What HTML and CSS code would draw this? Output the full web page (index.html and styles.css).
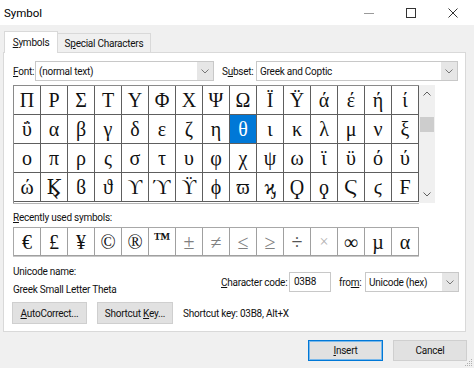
FILE: index.html
```html
<!DOCTYPE html>
<html>
<head>
<meta charset="utf-8">
<link rel="stylesheet" href="styles.css">
</head>
<body>
<div class="titlebar">
  <span class="title">Symbol</span>
  <div class="controls">
    <div class="ctrl"><svg width="10" height="10" viewBox="0 0 10 10"><path d="M0 5.5H10" stroke="#9a9a9a" stroke-width="1"/></svg></div>
    <div class="ctrl"><svg width="10" height="10" viewBox="0 0 10 10"><rect x="0.5" y="0.5" width="9" height="9" fill="none" stroke="#333" stroke-width="1"/></svg></div>
    <div class="ctrl"><svg width="10" height="10" viewBox="0 0 10 10"><path d="M0.5 0.5L9.5 9.5M9.5 0.5L0.5 9.5" stroke="#333" stroke-width="1"/></svg></div>
  </div>
</div>
<div class="tabs">
  <div class="tab active"><u>S</u>ymbols</div>
  <div class="tab">S<u>p</u>ecial Characters</div>
</div>
<div class="panel">
  <div class="fontrow">
    <span class="lbl lbl-font"><u>F</u>ont:</span>
    <div class="select sel-font"><span class="val">(normal text)</span><span class="drop"><svg width="8" height="5" viewBox="0 0 8 5"><path d="M0.5 0.5L4 4L7.5 0.5" fill="none" stroke="#777" stroke-width="1"/></svg></span></div>
    <span class="lbl lbl-subset">S<u>u</u>bset:</span>
    <div class="select sel-subset"><span class="val">Greek and Coptic</span><span class="drop"><svg width="8" height="5" viewBox="0 0 8 5"><path d="M0.5 0.5L4 4L7.5 0.5" fill="none" stroke="#777" stroke-width="1"/></svg></span></div>
  </div>
  <div class="gridwrap">
    <div class="grid">
      <div class="c">Π</div><div class="c">Ρ</div><div class="c">Σ</div><div class="c">Τ</div><div class="c">Υ</div><div class="c">Φ</div><div class="c">Χ</div><div class="c">Ψ</div><div class="c">Ω</div><div class="c">Ϊ</div><div class="c">Ϋ</div><div class="c">ά</div><div class="c">έ</div><div class="c">ή</div><div class="c">ί</div>
      <div class="c">ΰ</div><div class="c">α</div><div class="c">β</div><div class="c">γ</div><div class="c">δ</div><div class="c">ε</div><div class="c">ζ</div><div class="c">η</div><div class="c sel">θ</div><div class="c">ι</div><div class="c">κ</div><div class="c">λ</div><div class="c">μ</div><div class="c">ν</div><div class="c">ξ</div>
      <div class="c">ο</div><div class="c">π</div><div class="c">ρ</div><div class="c">ς</div><div class="c">σ</div><div class="c">τ</div><div class="c">υ</div><div class="c">φ</div><div class="c">χ</div><div class="c">ψ</div><div class="c">ω</div><div class="c">ϊ</div><div class="c">ϋ</div><div class="c">ό</div><div class="c">ύ</div>
      <div class="c">ώ</div><div class="c">Ϗ</div><div class="c">ϐ</div><div class="c">ϑ</div><div class="c">ϒ</div><div class="c">ϓ</div><div class="c">ϔ</div><div class="c">ϕ</div><div class="c">ϖ</div><div class="c">ϗ</div><div class="c">Ϙ</div><div class="c">ϙ</div><div class="c">Ϛ</div><div class="c">ϛ</div><div class="c">Ϝ</div>
    </div>
    <div class="scroll">
      <div class="arrow"><svg width="8" height="5" viewBox="0 0 8 5"><path d="M0.5 4.5L4 1L7.5 4.5" fill="none" stroke="#606060" stroke-width="1"/></svg></div>
      <div class="thumb"></div>
      <div class="track"></div>
      <div class="arrow"><svg width="8" height="5" viewBox="0 0 8 5"><path d="M0.5 0.5L4 4L7.5 0.5" fill="none" stroke="#606060" stroke-width="1"/></svg></div>
    </div>
  </div>
  <div class="recent-label"><u>R</u>ecently used symbols:</div>
  <div class="recent">
    <div class="c">€</div><div class="c">£</div><div class="c">¥</div><div class="c">©</div><div class="c">®</div><div class="c tm">™</div><div class="c dim">±</div><div class="c dim">≠</div><div class="c dim">≤</div><div class="c dim">≥</div><div class="c mid">÷</div><div class="c faint">×</div><div class="c">∞</div><div class="c">µ</div><div class="c">α</div>
  </div>
  <div class="info">
    <div class="names">
      <div class="line">Unicode name:</div>
      <div class="line line2">Greek Small Letter Theta</div>
    </div>
    <div class="code">
      <span class="lbl lbl-code"><u>C</u>haracter code:</span>
      <div class="input">03B8</div>
      <span class="lbl lbl-from">fro<u>m</u>:</span>
      <div class="select sel-from"><span class="val">Unicode (hex)</span><span class="drop"><svg width="8" height="5" viewBox="0 0 8 5"><path d="M0.5 0.5L4 4L7.5 0.5" fill="none" stroke="#777" stroke-width="1"/></svg></span></div>
    </div>
  </div>
  <div class="actions">
    <div class="btn btn-auto"><u>A</u>utoCorrect...</div>
    <div class="btn btn-key">Shortcut&nbsp;<u>K</u>ey...</div>
    <span class="shortcut">Shortcut key: 03B8, Alt+X</span>
  </div>
</div>
<div class="footer">
  <div class="btn btn-insert"><u>I</u>nsert</div>
  <div class="btn btn-cancel">Cancel</div>
</div>
<svg class="grip" width="8" height="8" viewBox="0 0 8 8"><g fill="#b0b0b0"><rect x="6" y="0" width="1" height="1"/><rect x="4" y="2" width="1" height="1"/><rect x="6" y="2" width="1" height="1"/><rect x="2" y="4" width="1" height="1"/><rect x="4" y="4" width="1" height="1"/><rect x="6" y="4" width="1" height="1"/><rect x="0" y="6" width="1" height="1"/><rect x="2" y="6" width="1" height="1"/><rect x="4" y="6" width="1" height="1"/><rect x="6" y="6" width="1" height="1"/></g></svg>
</body>
</html>
```
FILE: styles.css
```css
* { box-sizing: border-box; }
html, body { margin: 0; padding: 0; }
body {
  width: 474px;
  height: 368px;
  background: #f0f0f0;
  font-family: Roboto, "Open Sans", sans-serif;
  font-size: 10px;
  letter-spacing: -0.25px;
  color: #000;
  overflow: hidden;
  position: relative;
}
u { text-decoration: underline; text-underline-offset: 1px; }

.titlebar {
  height: 25px;
  background: #fff;
  display: flex;
  align-items: center;
  padding-left: 4px;
}
.title { flex: 1; font-size: 11.5px; letter-spacing: 0; }
.controls { display: flex; height: 25px; }
.ctrl { width: 42px; height: 25px; display: flex; align-items: center; justify-content: center; }

.tabs {
  height: 27px;
  display: flex;
  align-items: flex-end;
  padding-left: 4px;
}
.tab {
  height: 19px;
  width: 93px;
  display: flex;
  align-items: center;
  justify-content: center;
  background: #f0f0f0;
  border: 1px solid #d9d9d9;
  border-bottom: none;
  border-left: none;
  color: #111;
}
.tab.active {
  width: 54px;
  height: 22px;
  background: #fff;
  border-left: 1px solid #d9d9d9;
  margin-bottom: -1px;
  position: relative;
  z-index: 1;
}

.panel {
  margin-left: 3px;
  width: 463px;
  height: 280px;
  background: #fff;
  border: 1px solid #d9d9d9;
  padding: 8px 0 0 9px;
}

.fontrow { display: flex; align-items: center; height: 20px; }
.lbl { white-space: nowrap; color: #111; }
.lbl-font { width: 22px; }
.lbl-subset { width: 34px; margin-left: 8px; }

.select {
  height: 20px;
  border: 1px solid #c8c8c8;
  display: flex;
  align-items: center;
  background: #fff;
}
.select .val { padding-left: 3px; flex: 1; white-space: nowrap; color: #111; }
.select .drop {
  width: 16px;
  height: 18px;
  background: #e6e6e6;
  display: flex;
  align-items: center;
  justify-content: center;
}
.sel-font { width: 179px; }
.sel-subset { width: 202px; }

.gridwrap { display: flex; margin-top: 4px; }
.grid {
  display: grid;
  grid-template-columns: repeat(15, 27px);
  grid-auto-rows: 29px;
  border-top: 1px solid #8a8a8a;
  border-left: 1px solid #8a8a8a;
  box-shadow: 0 1px 0 #b5b5b5;
}
.c {
  border-right: 1px solid #5e5e5e;
  border-bottom: 1px solid #5e5e5e;
  display: flex;
  align-items: center;
  justify-content: center;
  font-family: "Liberation Serif", "DejaVu Serif", serif;
  font-size: 20px;
  letter-spacing: 0;
  color: #111;
  line-height: 1;
}
.c.sel { background: #0078d7; color: #fff; }

.scroll {
  width: 16px;
  height: 118px;
  background: #f0f0f0;
  display: flex;
  flex-direction: column;
}
.scroll .arrow { height: 17px; display: flex; align-items: center; justify-content: center; }
.scroll .thumb { height: 15px; margin: 15px 1px 0 1px; background: #cdcdcd; }
.scroll .track { flex: 1; }

.recent-label { margin-top: 8px; height: 14px; line-height: 14px; color: #111; }
.recent {
  margin-top: 2px;
  display: grid;
  grid-template-columns: repeat(15, 27px);
  grid-auto-rows: 28px;
  width: 406px;
  border-top: 1px solid #a8a8a8;
  border-left: 1px solid #a8a8a8;
  box-shadow: 0 1px 0 #c8c8c8;
}
.recent .c { border-color: #a0a0a0; }
.recent .tm { font-size: 17px; font-weight: bold; align-items: flex-start; padding-top: 2px; }
.recent .dim { color: #808080; }
.recent .mid { color: #555; }
.recent .faint { color: #b0b0b0; font-size: 16px; }

.info { display: flex; margin-top: 8px; height: 34px; }
.names { width: 208px; }
.line { height: 16px; line-height: 16px; color: #111; }
.line2 { margin-top: 2px; }
.code { display: flex; align-items: center; height: 20px; margin-top: 8px; }
.lbl-code { width: 68px; }
.input {
  width: 42px;
  height: 20px;
  border: 1px solid #c8c8c8;
  padding-left: 4px;
  line-height: 18px;
  color: #111;
}
.lbl-from { margin-left: 8px; width: 26px; }
.sel-from { width: 94px; }

.actions { display: flex; align-items: center; margin-top: 4px; height: 22px; }
.btn {
  height: 22px;
  background: #e1e1e1;
  border: 1px solid #cfcfcf;
  display: flex;
  align-items: center;
  justify-content: center;
  color: #111;
  white-space: nowrap;
}
.btn-auto { width: 75px; margin-left: -1px; }
.btn-key { width: 76px; margin-left: 10px; }
.shortcut { margin-left: 10px; color: #111; }

.footer {
  display: flex;
  justify-content: flex-end;
  gap: 10px;
  margin-top: 8px;
  padding-right: 7px;
}
.btn-insert { width: 75px; height: 21px; border: 1px solid #0078d7; box-shadow: inset 0 0 0 1px #7ab8ea; }
.btn-cancel { width: 74px; height: 21px; }

.grip { position: absolute; right: 1px; bottom: 1px; }
```
